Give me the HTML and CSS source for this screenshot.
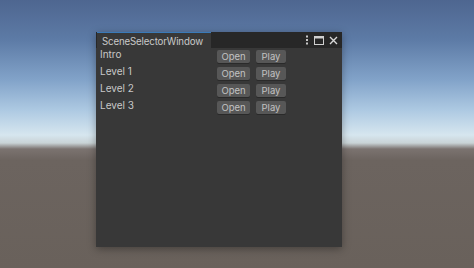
FILE: index.html
```html
<!DOCTYPE html>
<html>
<head>
<meta charset="utf-8">
<link rel="stylesheet" href="styles.css">
</head>
<body>
<div class="scene">
  <div class="window">
    <div class="titlebar">
      <div class="tab">SceneSelectorWindow</div>
      <div class="controls">
        <svg class="ico" width="4" height="10" viewBox="0 0 4 10"><rect x="1" y="0.5" width="2" height="2" fill="#c8c8c8"/><rect x="1" y="4" width="2" height="2" fill="#c8c8c8"/><rect x="1" y="7.5" width="2" height="2" fill="#c8c8c8"/></svg>
        <svg class="ico" width="10" height="9" viewBox="0 0 10 9"><rect x="0.5" y="0.5" width="9" height="8" fill="none" stroke="#d0d0d0" stroke-width="1"/><rect x="0.5" y="0.5" width="9" height="2" fill="#d0d0d0"/></svg>
        <svg class="ico" width="9" height="9" viewBox="0 0 9 9"><path d="M1 1 L8 8 M8 1 L1 8" stroke="#d8d8d8" stroke-width="1.4"/></svg>
      </div>
    </div>
    <div class="content">
      <div class="row"><span class="label">Intro</span><button class="btn open">Open</button><button class="btn play">Play</button></div>
      <div class="row"><span class="label">Level 1</span><button class="btn open">Open</button><button class="btn play">Play</button></div>
      <div class="row"><span class="label">Level 2</span><button class="btn open">Open</button><button class="btn play">Play</button></div>
      <div class="row"><span class="label">Level 3</span><button class="btn open">Open</button><button class="btn play">Play</button></div>
    </div>
  </div>
</div>
</body>
</html>
```
FILE: styles.css
```css
html, body {
  margin: 0;
  padding: 0;
  width: 474px;
  height: 268px;
  overflow: hidden;
}
body {
  font-family: Inter, "Noto Sans", sans-serif;
  background: linear-gradient(to bottom,
    #4e6690 0px,
    #5d7ba6 40px,
    #82a3c9 80px,
    #adc9e2 110px,
    #d6e6ef 135px,
    #c9d3d6 143px,
    #7b7370 149px,
    #6c645f 160px,
    #69615b 268px);
}
.scene {
  padding: 32px 0 0 96px;
}
.window {
  width: 246px;
  height: 215px;
  background: #383838;
  box-shadow: 0 2px 8px rgba(0,0,0,0.35);
  display: flex;
  flex-direction: column;
}
.titlebar {
  height: 16px;
  background: #272727;
  display: flex;
  align-items: stretch;
}
.tab {
  margin-left: 1px;
  width: 114px;
  box-sizing: border-box;
  border-top: 1px solid #3a7ab8;
  background: #383838;
  color: #c9c9c9;
  font-size: 9.7px;
  line-height: 15px;
  padding: 1px 0 0 5px;
  letter-spacing: -0.15px;
}
.controls {
  margin-left: auto;
  display: flex;
  align-items: center;
  gap: 5px;
  padding-right: 4px;
}
.ico { display: block; }
.content {
  padding: 0 0 0 4px;
}
.row {
  height: 17px;
  display: flex;
  align-items: flex-start;
}
.label {
  width: 117px;
  color: #c8c8c8;
  font-size: 10px;
  line-height: 13px;
}
.btn {
  font-family: Inter, "Noto Sans", sans-serif;
  margin: 2px 0 0 0;
  height: 13px;
  padding: 0;
  border: none;
  border-radius: 2px;
  background: #575757;
  color: #c2c2c2;
  font-size: 9.5px;
  line-height: 13px;
  box-shadow: 0 1px 0 #2a2a2a;
}
.open { width: 33px; }
.play { width: 30px; margin-left: 6px; }
```
